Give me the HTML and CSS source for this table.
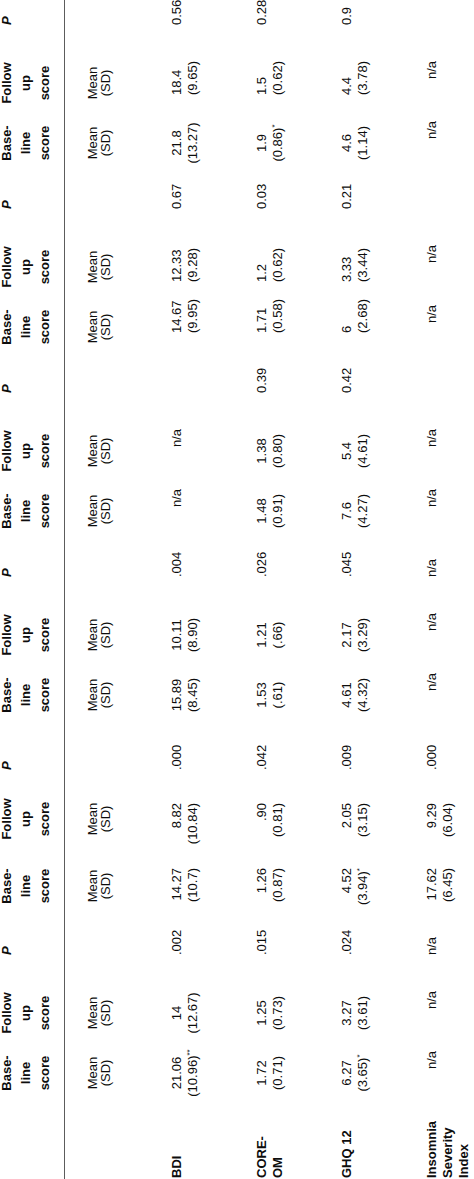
FILE: index.html
```html
<!DOCTYPE html>
<html>
<head>
<meta charset="utf-8">
<title>Scores table</title>
<link rel="stylesheet" href="styles.css">
</head>
<body>
<div class="page">
<table class="results">
<colgroup>
<col class="c-label">
<col class="c-base"><col class="c-follow"><col class="c-p">
<col class="c-base-w"><col class="c-follow-w"><col class="c-p-n">
<col class="c-base"><col class="c-follow"><col class="c-p">
<col class="c-base"><col class="c-follow"><col class="c-p">
<col class="c-base"><col class="c-follow"><col class="c-p">
<col class="c-base"><col class="c-follow"><col class="c-p">
</colgroup>
<thead>
<tr>
<th class="label"></th>
<th><span class="hl">Base-</span><span class="hl">line</span><span class="hl">score</span></th><th><span class="hl">Follow</span><span class="hl">up</span><span class="hl">score</span></th><th class="p"><i>P</i></th>
<th><span class="hl">Base-</span><span class="hl">line</span><span class="hl">score</span></th><th><span class="hl">Follow</span><span class="hl">up</span><span class="hl">score</span></th><th class="p p-n"><i>P</i></th>
<th><span class="hl">Base-</span><span class="hl">line</span><span class="hl">score</span></th><th><span class="hl">Follow</span><span class="hl">up</span><span class="hl">score</span></th><th class="p"><i>P</i></th>
<th><span class="hl">Base-</span><span class="hl">line</span><span class="hl">score</span></th><th><span class="hl">Follow</span><span class="hl">up</span><span class="hl">score</span></th><th class="p"><i>P</i></th>
<th><span class="hl">Base-</span><span class="hl">line</span><span class="hl">score</span></th><th><span class="hl">Follow</span><span class="hl">up</span><span class="hl">score</span></th><th class="p"><i>P</i></th>
<th><span class="hl">Base-</span><span class="hl">line</span><span class="hl">score</span></th><th><span class="hl">Follow</span><span class="hl">up</span><span class="hl">score</span></th><th class="p"><i>P</i></th>
</tr>
</thead>
<tbody>
<tr class="units">
<td class="label"></td>
<td>Mean<br>(SD)</td><td>Mean<br>(SD)</td><td class="p"></td>
<td>Mean<br>(SD)</td><td>Mean<br>(SD)</td><td class="p p-n"></td>
<td>Mean<br>(SD)</td><td>Mean<br>(SD)</td><td class="p"></td>
<td>Mean<br>(SD)</td><td>Mean<br>(SD)</td><td class="p"></td>
<td>Mean<br>(SD)</td><td>Mean<br>(SD)</td><td class="p"></td>
<td>Mean<br>(SD)</td><td>Mean<br>(SD)</td><td class="p"></td>
</tr>
<tr>
<td class="label">BDI</td>
<td>21.06<br>(10.96)<sup>**</sup></td><td>14<br>(12.67)</td><td class="p">.002</td>
<td class="r rb">14.27<br>(10.7)</td><td class="r rf">8.82<br>(10.84)</td><td class="p p-n">.000</td>
<td>15.89<br>(8.45)</td><td>10.11<br>(8.90)</td><td class="p">.004</td>
<td class="na">n/a</td><td class="na">n/a</td><td class="p"></td>
<td class="lb3">14.67<br>(9.95)</td><td class="lf3">12.33<br>(9.28)</td><td class="p">0.67</td>
<td>21.8<br>(13.27)</td><td class="lf4">18.4<br>(9.65)</td><td class="p">0.56</td>
</tr>
<tr>
<td class="label">CORE-<br>OM</td>
<td>1.72<br>(0.71)</td><td>1.25<br>(0.73)</td><td class="p">.015</td>
<td class="r rb">1.26<br>(0.87)</td><td class="r rf">.90<br>(0.81)</td><td class="p p-n">.042</td>
<td>1.53<br>(.61)</td><td>1.21<br>(.66)</td><td class="p">.026</td>
<td>1.48<br>(0.91)</td><td>1.38<br>(0.80)</td><td class="p">0.39</td>
<td class="lb3">1.71<br>(0.58)</td><td class="lf3">1.2<br>(0.62)</td><td class="p">0.03</td>
<td>1.9<br>(0.86)<sup>*</sup></td><td class="lf4">1.5<br>(0.62)</td><td class="p">0.28</td>
</tr>
<tr>
<td class="label">GHQ 12</td>
<td>6.27<br>(3.65)<sup>*</sup></td><td>3.27<br>(3.61)</td><td class="p">.024</td>
<td class="r rb">4.52<br>(3.94)<sup>*</sup></td><td class="r rf">2.05<br>(3.15)</td><td class="p p-n">.009</td>
<td>4.61<br>(4.32)</td><td>2.17<br>(3.29)</td><td class="p">.045</td>
<td>7.6<br>(4.27)</td><td>5.4<br>(4.61)</td><td class="p">0.42</td>
<td class="lb3">6<br>(2.68)</td><td class="lf3">3.33<br>(3.44)</td><td class="p">0.21</td>
<td>4.6<br>(1.14)</td><td class="lf4">4.4<br>(3.78)</td><td class="p">0.9</td>
</tr>
<tr>
<td class="label">Insomnia<br>Severity<br>Index</td>
<td class="na">n/a</td><td class="na">n/a</td><td class="p">n/a</td>
<td class="r rb">17.62<br>(6.45)</td><td class="r rf">9.29<br>(6.04)</td><td class="p p-n">.000</td>
<td class="na">n/a</td><td class="na">n/a</td><td class="p">n/a</td>
<td class="na">n/a</td><td class="na">n/a</td><td class="p"></td>
<td class="na">n/a</td><td class="na">n/a</td><td class="p"></td>
<td class="na">n/a</td><td class="na">n/a</td><td class="p"></td>
</tr>
</tbody>
</table>
</div>
</body>
</html>
```

FILE: styles.css
```css
html, body {
  margin: 0;
  padding: 0;
  background: #ffffff;
  overflow: hidden;
}

.page {
  width: 474px;
  height: 1179px;
  overflow: hidden;
}

/* The table is printed sideways: laid out normally, then turned a quarter turn. */
.results {
  width: 1187px;
  table-layout: fixed;
  border-collapse: separate;
  border-spacing: 0;
  font-family: "Liberation Sans", Arial, Helvetica, sans-serif;
  font-size: 13px;
  color: #0d0d0d;
  transform-origin: 0 0;
  transform: rotate(-90deg) translate(-1180px, 0);
}

.c-label { width: 73px; }
.c-base { width: 68px; }
.c-follow { width: 52px; }
.c-p { width: 64px; }
.c-base-w { width: 74px; }
.c-follow-w { width: 60px; }
.c-p-n { width: 60px; }

.results th {
  font-weight: bold;
  vertical-align: top;
  text-align: center;
  line-height: 13px;
  padding: 0 0 13.5px 0;
  border-bottom: 1.5px solid #5c5c5c;
}

.results th .hl {
  display: block;
}

.results th .hl + .hl {
  margin-top: 5.75px;
}

.results td {
  vertical-align: top;
  text-align: center;
  line-height: 16px;
  padding: 19px 0 0 0;
  height: 85px;
  box-sizing: border-box;
  white-space: nowrap;
}

.results .units td {
  line-height: 13px;
  padding-top: 20.5px;
}

.results .p {
  text-align: left;
  padding-left: 32px;
}

.results .p-n {
  padding-left: 19px;
}

.results .label {
  text-align: left;
  padding-left: 2px;
  font-weight: bold;
}

.results td.r {
  text-align: right;
}

.results td.rb {
  padding-right: 19px;
}

.results td.rf {
  padding-right: 14px;
}

.results td.lb3 {
  text-align: left;
  padding-left: 28px;
}

.results td.lf3 {
  text-align: left;
  padding-left: 11px;
}

.results td.lf4 {
  text-align: left;
  padding-left: 14px;
}

.results td.na {
  padding-left: 26px;
}

.results sup {
  font-size: 8px;
  line-height: 0;
  vertical-align: 5px;
}
```
